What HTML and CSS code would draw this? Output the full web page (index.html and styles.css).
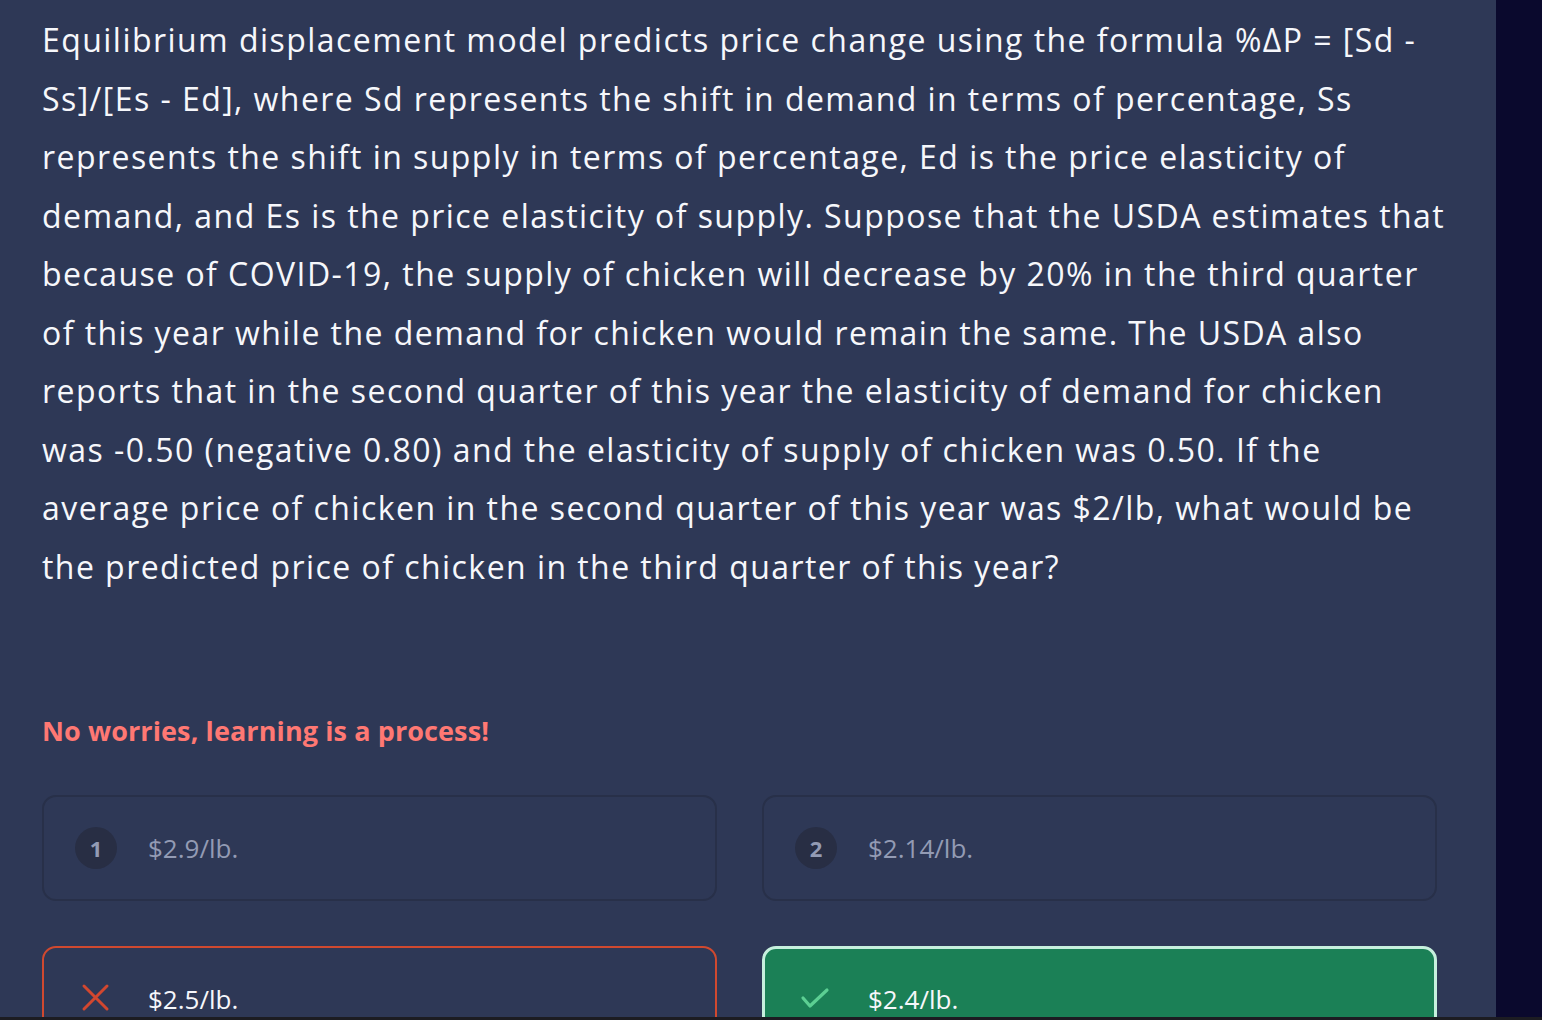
FILE: index.html
```html
<!DOCTYPE html>
<html lang="en">
<head>
<meta charset="utf-8">
<title>Question</title>
<link rel="stylesheet" href="styles.css">
</head>
<body>
<div class="screen">
  <div class="main">
    <section class="panel">
      <p class="question">Equilibrium displacement model predicts price change using the formula %ΔP = [Sd - Ss]/[Es - Ed], where Sd represents the shift in demand in terms of percentage, Ss represents the shift in supply in terms of percentage, Ed is the price elasticity of demand, and Es is the price elasticity of supply. Suppose that the USDA estimates that because of COVID-19, the supply of chicken will decrease by 20% in the third quarter of this year while the demand for chicken would remain the same. The USDA also reports that in the second quarter of this year the elasticity of demand for chicken was -0.50 (negative 0.80) and the elasticity of supply of chicken was 0.50. If the average price of chicken in the second quarter of this year was $2/lb, what would be the predicted price of chicken in the third quarter of this year?</p>
      <p class="feedback">No worries, learning is a process!</p>
      <div class="options">
        <div class="option">
          <span class="badge">1</span>
          <span class="label">$2.9/lb.</span>
        </div>
        <div class="option">
          <span class="badge">2</span>
          <span class="label">$2.14/lb.</span>
        </div>
        <div class="option wrong">
          <span class="icon">
            <svg width="42" height="42" viewBox="0 0 42 42"><path d="M9 8 L32 31 M32 8 L9 31" stroke="#d2472f" stroke-width="3" stroke-linecap="round" fill="none"/></svg>
          </span>
          <span class="label">$2.5/lb.</span>
        </div>
        <div class="option right">
          <span class="icon">
            <svg width="42" height="42" viewBox="0 0 42 42"><path d="M8 20 L15 28 L32 12" stroke="#5ccf93" stroke-width="3.2" stroke-linecap="round" stroke-linejoin="round" fill="none"/></svg>
          </span>
          <span class="label">$2.4/lb.</span>
        </div>
      </div>
    </section>
    <aside class="side"></aside>
  </div>
  <div class="bottombar"></div>
</div>
</body>
</html>
```
FILE: styles.css
```css
html, body {
  margin: 0;
  padding: 0;
  height: 100%;
}
body {
  background: #0a092d;
  font-family: "Open Sans", "Noto Sans", sans-serif;
  color: #f6f7fb;
}
.screen {
  display: flex;
  flex-direction: column;
  height: 1020px;
  overflow: hidden;
}
.main {
  flex: 1;
  display: flex;
  min-height: 0;
  overflow: hidden;
}
.panel {
  width: 1496px;
  flex: none;
  box-sizing: border-box;
  background: #2e3856;
  padding: 11px 47px 0 42px;
}
.side {
  flex: 1;
  background: #0a092d;
}
.bottombar {
  height: 3px;
  background: #1c1c22;
  flex: none;
}
.question {
  margin: 0;
  font-size: 32px;
  letter-spacing: 1.45px;
  line-height: 58.5px;
  font-weight: 400;
  color: #f6f7fb;
}
.feedback {
  margin: 115px 0 0 0;
  font-size: 27px;
  letter-spacing: 0.1px;
  line-height: 40px;
  font-weight: 700;
  color: #ff7873;
}
.options {
  margin-top: 44px;
  display: grid;
  grid-template-columns: 675px 675px;
  column-gap: 45px;
  row-gap: 45px;
}
.option {
  box-sizing: border-box;
  height: 106px;
  border: 2px solid #283049;
  border-radius: 14px;
  display: flex;
  align-items: center;
  padding-left: 31px;
  gap: 31px;
}
.badge {
  width: 42px;
  height: 42px;
  border-radius: 50%;
  background: #282e44;
  color: #939bb4;
  font-weight: 700;
  font-size: 22px;
  display: flex;
  align-items: center;
  justify-content: center;
  flex: none;
}
.icon {
  width: 42px;
  height: 42px;
  flex: none;
  display: flex;
}
.label {
  font-size: 26px;
  color: #939bb4;
}
.option.wrong {
  border-color: #d0492f;
}
.option.wrong .label,
.option.right .label {
  color: #f6f7fb;
}
.option.right {
  background: #1b8056;
  border: 3px solid #c6f0dd;
  padding-left: 30px;
}
```
